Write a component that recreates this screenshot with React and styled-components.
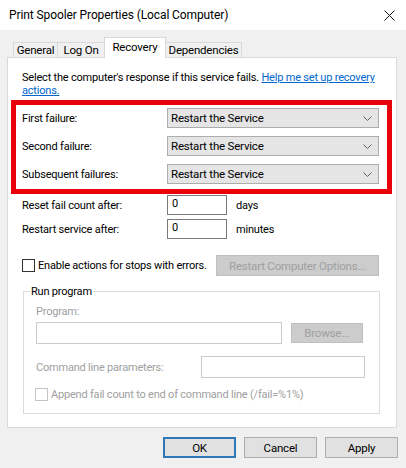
import React from 'react';
import styled, { createGlobalStyle } from 'styled-components';

const uiFont = `'Roboto', 'Liberation Sans', sans-serif`;

const GlobalStyle = createGlobalStyle`
  html, body {
    margin: 0;
    padding: 0;
    background: #f0f0f0;
  }
  body {
    font-family: ${uiFont};
    font-size: 11px;
    letter-spacing: -0.2px;
    color: #000;
  }
`;

const Window = styled.div`
  width: 406px;
  height: 468px;
  background: #f0f0f0;
  display: flex;
  flex-direction: column;
  overflow: hidden;
`;

const TitleBar = styled.div`
  height: 30px;
  flex: none;
  background: #fff;
  display: flex;
  align-items: center;
  justify-content: space-between;
  padding: 0 11px 0 9px;
  font-size: 12px;
  letter-spacing: -0.1px;
`;

const Body = styled.div`
  flex: 1;
  padding: 8px 9px 0 7px;
  display: flex;
  flex-direction: column;
`;

const TabStrip = styled.div`
  display: flex;
  align-items: flex-end;
  height: 20px;
  padding-left: 7px;
  margin-bottom: -1px;
  position: relative;
  z-index: 1;
`;

const Tab = styled.div`
  width: ${p => p.width}px;
  height: ${p => (p.active ? 21 : 16)}px;
  box-sizing: border-box;
  border: 1px solid #d9d9d9;
  border-bottom: ${p => (p.active ? 'none' : '1px solid #d9d9d9')};
  margin-left: -1px;
  background: ${p => (p.active ? '#fff' : '#f0f0f0')};
  display: flex;
  align-items: ${p => (p.active ? 'flex-start' : 'center')};
  padding-top: ${p => (p.active ? 2 : 0)}px;
  justify-content: center;
  font-size: 11.5px;
  line-height: 14px;
`;

const Panel = styled.div`
  height: 371px;
  box-sizing: border-box;
  background: #fff;
  border: 1px solid #d9d9d9;
  padding-top: 13px;
  display: flex;
  flex-direction: column;
`;

const Intro = styled.p`
  margin: 0 14px;
  line-height: 13px;
`;

const Link = styled.a`
  color: #0066cc;
  text-decoration: underline;
`;

const Highlight = styled.div`
  margin: 3px 0 0 3px;
  width: 381px;
  box-sizing: border-box;
  border: 5px solid #e8000b;
  padding: 3px 8px 5px 6px;
  display: grid;
  grid-template-columns: 145px 212px;
  row-gap: 8px;
  align-items: center;
`;

const Label = styled.span`
  color: ${p => (p.disabled ? '#a0a0a0' : '#000')};
  white-space: nowrap;
`;

const Combo = styled.div`
  height: 20px;
  box-sizing: border-box;
  background: #e5e5e5;
  border: 1px solid #adadad;
  display: flex;
  align-items: center;
  justify-content: space-between;
  padding: 0 6px 0 3px;
  font-size: 11.5px;
`;

const FieldRow = styled.div`
  margin: ${p => p.top}px 0 0 14px;
  display: grid;
  grid-template-columns: 145px 60px auto;
  align-items: center;
  height: 20px;
`;

const NumberBox = styled.div`
  height: 20px;
  box-sizing: border-box;
  border: 1px solid #7a7a7a;
  padding: 1px 0 0 4px;
  line-height: 14px;
`;

const Unit = styled.span`
  margin-left: 9px;
`;

const OptionsRow = styled.div`
  margin: 16px 17px 0 14px;
  height: 21px;
  display: flex;
  align-items: center;
`;

const Check = styled.span`
  width: 13px;
  height: 13px;
  box-sizing: border-box;
  border: 1px solid ${p => (p.disabled ? '#c4c4c4' : '#333')};
  background: #fff;
  flex: none;
  margin-right: ${p => p.gap}px;
`;

const Button = styled.div`
  width: ${p => p.width || 73}px;
  height: ${p => p.height || 21}px;
  box-sizing: border-box;
  background: ${p => (p.disabled ? '#cccccc' : '#e1e1e1')};
  border: ${p =>
    p.primary ? '2px solid #2e78b8' : p.disabled ? '1px solid #bfbfbf' : '1px solid #adadad'};
  color: ${p => (p.disabled ? '#a0a0a0' : '#000')};
  display: flex;
  align-items: center;
  justify-content: center;
  white-space: nowrap;
  font-size: 11.5px;
  margin-left: ${p => p.ml || 0};
  flex: none;
`;

const Group = styled.fieldset`
  margin: 8px 16px 0 15px;
  padding: 0 14px 12px 12px;
  border: 1px solid #dcdcdc;
  min-width: 0;
`;

const Legend = styled.legend`
  margin-left: -6px;
  padding: 0 1px;
  line-height: 15px;
`;

const GroupLabel = styled.div`
  margin-top: 6px;
  line-height: 13px;
  color: #a0a0a0;
`;

const ProgramRow = styled.div`
  margin-top: 4px;
  display: flex;
  align-items: center;
  gap: 9px;
`;

const TextBox = styled.div`
  width: ${p => p.width}px;
  height: 22px;
  box-sizing: border-box;
  border: 1px solid #cccccc;
  background: #fff;
  flex: none;
`;

const ParamRow = styled.div`
  margin-top: 12px;
  display: flex;
  align-items: center;
  justify-content: space-between;
`;

const AppendRow = styled.div`
  margin-top: 10px;
  display: flex;
  align-items: center;
  height: 13px;
  margin-left: -1px;
`;

const Footer = styled.div`
  margin: 9px -1px 0 0;
  display: flex;
  justify-content: flex-end;
  gap: 8px;
`;

const Close = () => (
  <svg width="11" height="11" viewBox="0 0 11 11">
    <path d="M0.5 0.5 L10.5 10.5 M10.5 0.5 L0.5 10.5" stroke="#111" strokeWidth="1" fill="none" />
  </svg>
);

const Chevron = () => (
  <svg width="9" height="5" viewBox="0 0 9 5">
    <path d="M0.5 0.5 L4.5 4.5 L8.5 0.5" stroke="#606060" strokeWidth="1" fill="none" />
  </svg>
);

const failures = ['First failure:', 'Second failure:', 'Subsequent failures:'];

const App = () => (
  <Window>
    <GlobalStyle />
    <TitleBar>
      <span>Print Spooler Properties (Local Computer)</span>
      <Close />
    </TitleBar>
    <Body>
      <TabStrip>
        <Tab width={45}>General</Tab>
        <Tab width={48}>Log On</Tab>
        <Tab width={62} active>Recovery</Tab>
        <Tab width={77}>Dependencies</Tab>
      </TabStrip>
      <Panel>
        <Intro>
          Select the computer's response if this service fails.{' '}
          <Link>Help me set up recovery</Link>
          <br />
          <Link>actions.</Link>
        </Intro>
        <Highlight>
          {failures.map(f => (
            <React.Fragment key={f}>
              <Label>{f}</Label>
              <Combo>
                <span>Restart the Service</span>
                <Chevron />
              </Combo>
            </React.Fragment>
          ))}
        </Highlight>
        <FieldRow top={1}>
          <Label>Reset fail count after:</Label>
          <NumberBox>0</NumberBox>
          <Unit>days</Unit>
        </FieldRow>
        <FieldRow top={4}>
          <Label>Restart service after:</Label>
          <NumberBox>0</NumberBox>
          <Unit>minutes</Unit>
        </FieldRow>
        <OptionsRow>
          <Check gap={3} />
          <Label>Enable actions for stops with errors.</Label>
          <Button disabled width={163} ml="auto">Restart Computer Options...</Button>
        </OptionsRow>
        <Group>
          <Legend>Run program</Legend>
          <GroupLabel>Program:</GroupLabel>
          <ProgramRow>
            <TextBox width={246} />
            <Button disabled width={72} height={20}>Browse...</Button>
          </ProgramRow>
          <ParamRow>
            <Label disabled>Command line parameters:</Label>
            <TextBox width={164} />
          </ParamRow>
          <AppendRow>
            <Check disabled gap={3} />
            <Label disabled>Append fail count to end of command line (/fail=%1%)</Label>
          </AppendRow>
        </Group>
      </Panel>
      <Footer>
        <Button primary>OK</Button>
        <Button>Cancel</Button>
        <Button>Apply</Button>
      </Footer>
    </Body>
  </Window>
);

export default App;
